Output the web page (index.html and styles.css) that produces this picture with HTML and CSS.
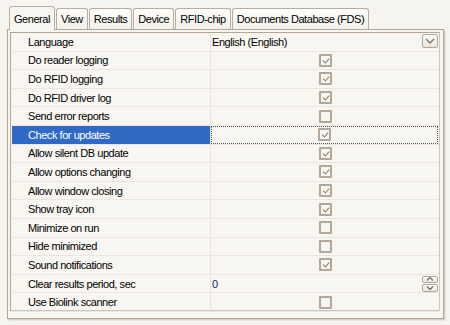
FILE: index.html
```html
<!DOCTYPE html>
<html>
<head>
<meta charset="utf-8">
<link rel="stylesheet" href="styles.css">
</head>
<body>
<div class="window">
  <div class="tabs">
    <div class="tab active">General</div>
    <div class="tab">View</div>
    <div class="tab">Results</div>
    <div class="tab">Device</div>
    <div class="tab">RFID-chip</div>
    <div class="tab">Documents Database (FDS)</div>
  </div>
  <div class="panel">
    <div class="grid">
      <div class="row">
        <div class="label">Language</div>
        <div class="value text">English (English)
          <span class="dropbtn"><svg width="10" height="6" viewBox="0 0 10 6"><path d="M1 1 L5 5 L9 1" fill="none" stroke="#8a7b6b" stroke-width="1.5"/></svg></span>
        </div>
      </div>
      <div class="row"><div class="label">Do reader logging</div><div class="value"><span class="cb checked"></span></div></div>
      <div class="row"><div class="label">Do RFID logging</div><div class="value"><span class="cb checked"></span></div></div>
      <div class="row"><div class="label">Do RFID driver log</div><div class="value"><span class="cb checked"></span></div></div>
      <div class="row"><div class="label">Send error reports</div><div class="value"><span class="cb"></span></div></div>
      <div class="row selected"><div class="label">Check for updates</div><div class="value focus"><span class="cb checked"></span></div></div>
      <div class="row"><div class="label">Allow silent DB update</div><div class="value"><span class="cb checked"></span></div></div>
      <div class="row"><div class="label">Allow options changing</div><div class="value"><span class="cb checked"></span></div></div>
      <div class="row"><div class="label">Allow window closing</div><div class="value"><span class="cb checked"></span></div></div>
      <div class="row"><div class="label">Show tray icon</div><div class="value"><span class="cb checked"></span></div></div>
      <div class="row"><div class="label">Minimize on run</div><div class="value"><span class="cb"></span></div></div>
      <div class="row"><div class="label">Hide minimized</div><div class="value"><span class="cb"></span></div></div>
      <div class="row"><div class="label">Sound notifications</div><div class="value"><span class="cb checked"></span></div></div>
      <div class="row">
        <div class="label">Clear results period, sec</div>
        <div class="value text"><span class="num">0</span>
          <span class="spin">
            <span class="spinbtn"><svg width="8" height="4" viewBox="0 0 8 4"><path d="M1 3.5 L4 0.5 L7 3.5" fill="none" stroke="#7d6e60" stroke-width="1.3"/></svg></span>
            <span class="spinbtn"><svg width="8" height="4" viewBox="0 0 8 4"><path d="M1 0.5 L4 3.5 L7 0.5" fill="none" stroke="#7d6e60" stroke-width="1.3"/></svg></span>
          </span>
        </div>
      </div>
      <div class="row"><div class="label">Use Biolink scanner</div><div class="value"><span class="cb"></span></div></div>
    </div>
  </div>
</div>
</body>
</html>
```

FILE: styles.css
```css
html, body {
  margin: 0;
  padding: 0;
  background: #f6f4ee;
}
body {
  font-family: "Liberation Sans", Arial, sans-serif;
  font-size: 11px;
  letter-spacing: -0.45px;
  color: #000;
  width: 450px;
  height: 325px;
  overflow: hidden;
}
.window {
  padding: 5px 6px 0 7px;
}
.tabs {
  display: flex;
  align-items: flex-end;
  padding-left: 2px;
  height: 24px;
  position: relative;
  z-index: 2;
}
.tab {
  height: 20px;
  line-height: 20px;
  padding: 0 4px;
  border: 1px solid #b9ad9f;
  border-bottom: none;
  border-radius: 3px 3px 0 0;
  background: linear-gradient(#fdfdfb, #f3f1e9);
  margin-right: 1px;
  white-space: nowrap;
  color: #000;
}
.tab.active {
  height: 23px;
  line-height: 24px;
  padding: 0 4px;
  background: #f8f6f0;
  margin-bottom: -1px;
  margin-right: 1px;
}
.panel {
  border: 1px solid #b3a696;
  box-shadow: 1px 1px 0 #d5cec3, 2px 2px 0 #e8e3db;
  background: #f8f6f0;
  padding: 2px 3px 6px 2px;
  box-sizing: border-box;
  height: 290px;
  width: 437px;
}
.grid {
  border: 1px solid #b3a696;
  border-right-color: #cfc6bb;
  border-bottom-color: #cfc6bb;
  background: #f8f6f0;
  height: 279px;
  box-sizing: border-box;
  padding-left: 1px;
}
.row {
  display: flex;
  height: 18.6px;
  box-sizing: border-box;
  border-bottom: 1px solid #ede5dd;
}
.label {
  width: 199px;
  flex: none;
  padding-left: 16px;
  box-sizing: border-box;
  border-right: 1px solid #ebe0d8;
  display: flex;
  align-items: center;
  white-space: nowrap;
}
.row.selected .label {
  background: #316ac5;
  color: #fff;
}
.value {
  flex: 1;
  display: flex;
  align-items: center;
  justify-content: center;
  position: relative;
}
.value.text {
  justify-content: flex-start;
  padding-left: 1px;
}
.value.focus {
  outline: 1px dotted #555;
  outline-offset: -1px;
  margin-right: 1px;
}
.num {
  color: #1a1a60;
}
.cb {
  width: 13px;
  height: 13px;
  box-sizing: border-box;
  border: 2px solid #b5a797;
  border-radius: 1px;
  background: #f8f6f0;
  display: block;
  position: relative;
}
.cb.checked::after {
  content: "";
  position: absolute;
  left: 3px;
  top: 1px;
  width: 3px;
  height: 5px;
  border: solid #8a7b6b;
  border-width: 0 1.5px 1.5px 0;
  transform: rotate(40deg);
}
.dropbtn {
  position: absolute;
  right: 1px;
  top: 1px;
  width: 16px;
  height: 14px;
  box-sizing: border-box;
  border: 1px solid #b3a696;
  border-radius: 2px;
  background: linear-gradient(#fbfaf6, #ece8de);
  display: flex;
  align-items: center;
  justify-content: center;
}
.spin {
  position: absolute;
  right: 1px;
  top: 1px;
  width: 16px;
  height: 16px;
  display: flex;
  flex-direction: column;
  gap: 1px;
}
.spinbtn {
  flex: 1;
  border: 1px solid #b3a696;
  border-radius: 2px;
  background: linear-gradient(#fbfaf6, #ece8de);
  display: flex;
  align-items: center;
  justify-content: center;
}
```
